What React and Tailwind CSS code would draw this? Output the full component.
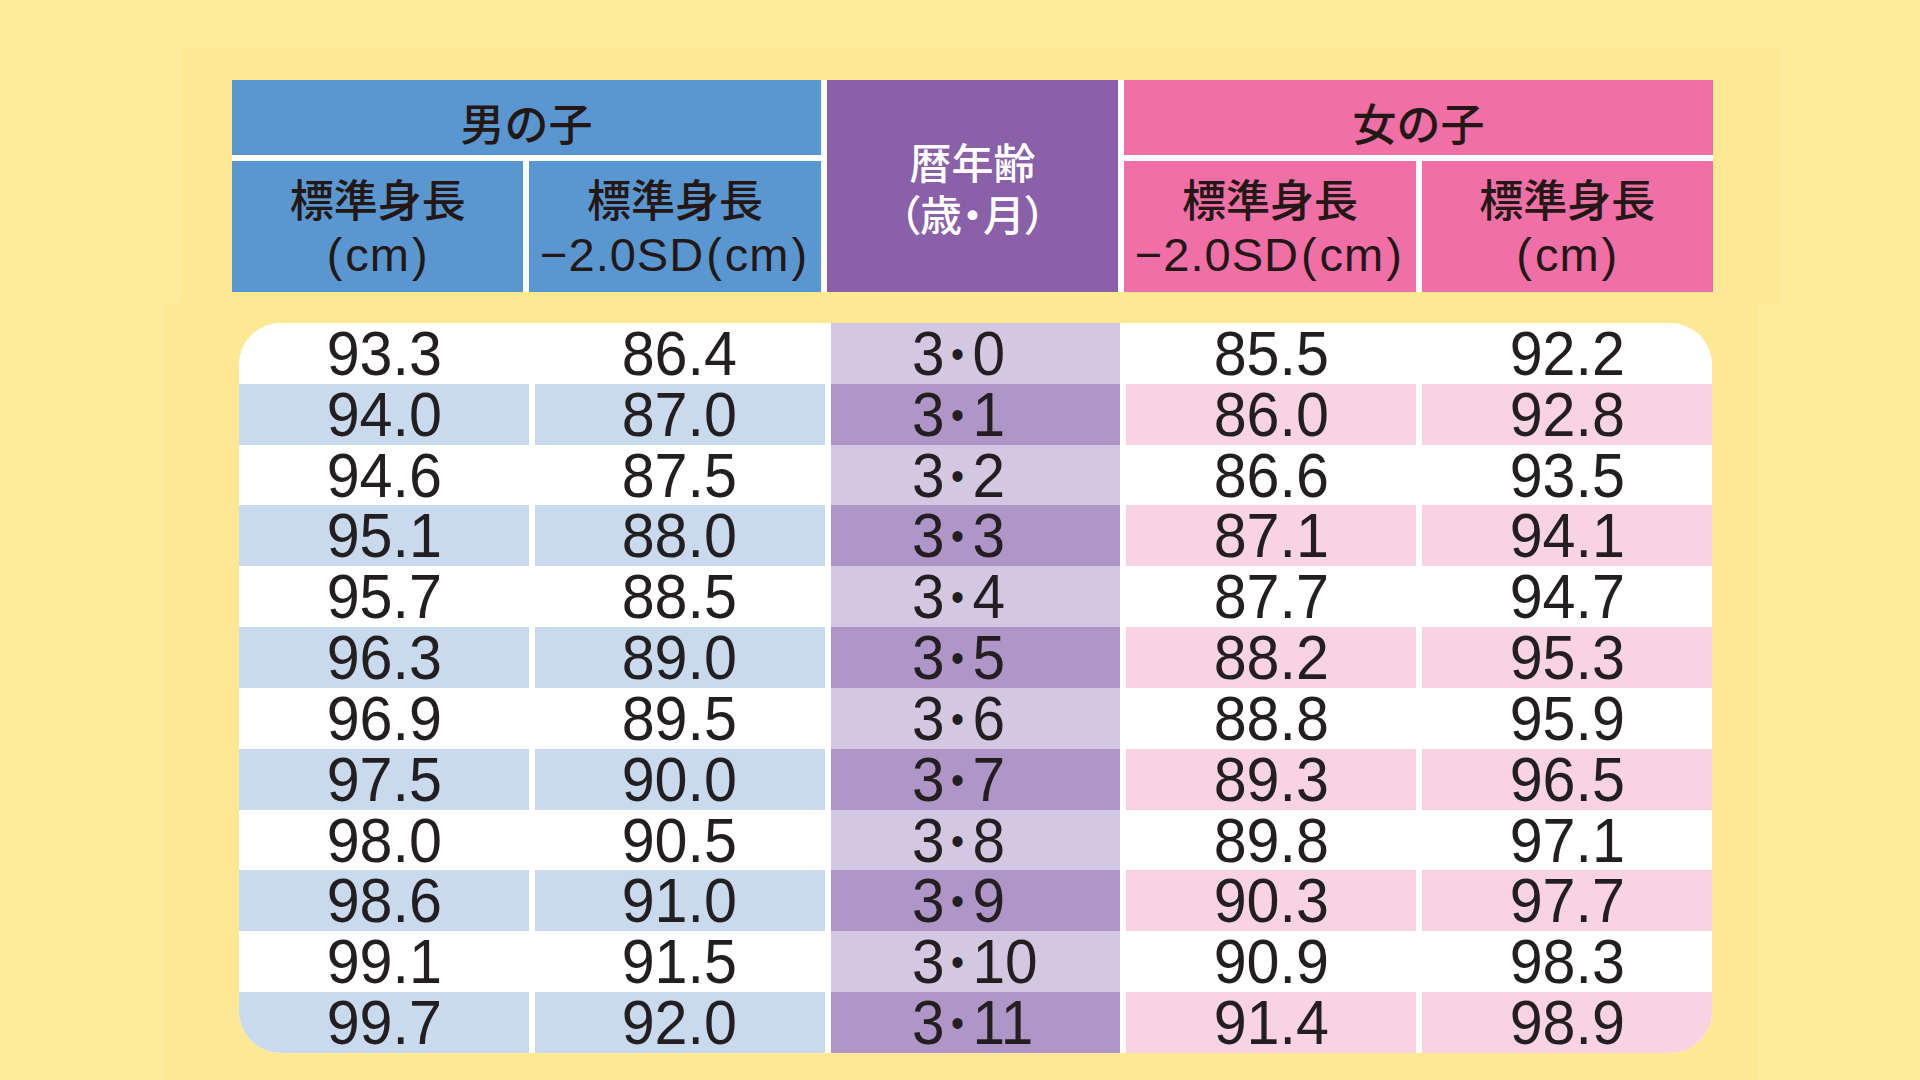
import React from "react";

const boysStd = ["93.3","94.0","94.6","95.1","95.7","96.3","96.9","97.5","98.0","98.6","99.1","99.7"];
const boysSd = ["86.4","87.0","87.5","88.0","88.5","89.0","89.5","90.0","90.5","91.0","91.5","92.0"];
const girlsSd = ["85.5","86.0","86.6","87.1","87.7","88.2","88.8","89.3","89.8","90.3","90.9","91.4"];
const girlsStd = ["92.2","92.8","93.5","94.1","94.7","95.3","95.9","96.5","97.1","97.7","98.3","98.9"];

const cjk = "font-['Noto_Sans_CJK_JP','Noto_Sans',sans-serif]";

function Num({ children }) {
  return <span className="inline-block scale-x-[0.94]">{children}</span>;
}

function Age({ m }) {
  return (
    <span className="inline-block scale-x-[0.93] origin-left">
      3<span className="pl-[7px] pr-[9px] text-[40px] align-[7px]">•</span>
      {m}
    </span>
  );
}

function Unit({ sd }) {
  return (
    <span className="mt-[5px] font-['Liberation_Sans',Arial,sans-serif] text-[47px] leading-[52px] tracking-[1px]">
      {sd ? "−2.0SD" : ""}
      <span className="px-[2px]">(</span>cm<span className="px-[2px]">)</span>
    </span>
  );
}

export default function App() {
  const cells = [];
  for (let i = 0; i < 12; i++) {
    const alt = i % 2 === 1;
    cells.push(
      <div key={"a" + i} className={`flex items-center justify-center ${alt ? "bg-[#c9daee]" : "bg-white"}`}>
        <Num>{boysStd[i]}</Num>
      </div>,
      <div key={"b" + i} className={`flex items-center justify-center ${alt ? "bg-[#c9daee]" : "bg-white"}`}>
        <Num>{boysSd[i]}</Num>
      </div>,
      <div key={"c" + i} className={`flex items-center justify-start pl-[81px] ${alt ? "bg-[#ae96c8]" : "bg-[#d3c8e2]"}`}>
        <Age m={i} />
      </div>,
      <div key={"d" + i} className={`flex items-center justify-center ${alt ? "bg-[#f9d3e3]" : "bg-white"}`}>
        <Num>{girlsSd[i]}</Num>
      </div>,
      <div key={"e" + i} className={`flex items-center justify-center ${alt ? "bg-[#f9d3e3]" : "bg-white"}`}>
        <Num>{girlsStd[i]}</Num>
      </div>
    );
  }

  return (
    <div className="w-[1920px] h-[1080px] bg-[#feec9d] flex flex-col overflow-hidden">
      {/* header panel */}
      <div className="ml-[181px] mt-[48px] w-[1599px] h-[255px] bg-[#fde894] pl-[51px] pt-[32px]">
        <div className={`grid grid-cols-5 grid-rows-[75px_131px] gap-[6px] bg-white w-[1481px] text-[#231815] ${cjk} font-medium`}>
          <div className="col-span-2 bg-[#5a96cf] flex items-center justify-center pt-[8px] text-[44px] leading-none">
            男の子
          </div>
          <div className="row-span-2 bg-[#8a61a9] flex flex-col items-center justify-center text-white text-[42px] leading-[52px] pt-[2px]">
            <span>暦年齢</span>
            <span className="[font-feature-settings:'palt']">（歳・月）</span>
          </div>
          <div className="col-span-2 bg-[#ef6fa6] flex items-center justify-center pt-[8px] text-[44px] leading-none">
            女の子
          </div>
          <div className="bg-[#5a96cf] flex flex-col items-center justify-center text-[44px] leading-[52px]">
            <span>標準身長</span>
            <Unit />
          </div>
          <div className="bg-[#5a96cf] flex flex-col items-center justify-center text-[44px] leading-[52px]">
            <span>標準身長</span>
            <Unit sd />
          </div>
          <div className="bg-[#ef6fa6] flex flex-col items-center justify-center text-[44px] leading-[52px]">
            <span>標準身長</span>
            <Unit sd />
          </div>
          <div className="bg-[#ef6fa6] flex flex-col items-center justify-center text-[44px] leading-[52px]">
            <span>標準身長</span>
            <Unit />
          </div>
        </div>
      </div>
      {/* data panel */}
      <div className="ml-[164px] w-[1593px] flex-1 bg-[#fde894] pl-[75px] pt-[20px]">
        <div className="grid grid-cols-5 grid-rows-12 gap-x-[6px] bg-white w-[1473px] h-[730px] rounded-[42px] overflow-hidden font-['Liberation_Sans',Arial,sans-serif] text-[63px] leading-none text-[#231f20]">
          {cells}
        </div>
      </div>
    </div>
  );
}
